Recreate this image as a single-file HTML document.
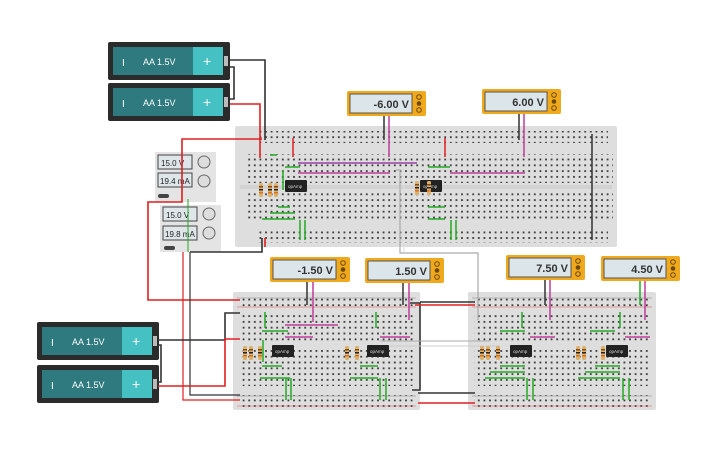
<!DOCTYPE html>
<html><head><meta charset="utf-8"><style>
html,body{margin:0;padding:0;background:#fff;width:725px;height:453px;overflow:hidden}
svg{display:block;font-family:"Liberation Sans",sans-serif}
</style></head><body>
<svg width="725" height="453" viewBox="0 0 725 453" xmlns="http://www.w3.org/2000/svg">
<defs>
<pattern id="h" x="0" y="0" width="5.6" height="5.8" patternUnits="userSpaceOnUse"><rect x="1.9" y="2" width="1.8" height="1.8" fill="#3a3a3a"/></pattern>
<pattern id="hr" x="0" y="0" width="5.6" height="5.6" patternUnits="userSpaceOnUse"><rect x="1.9" y="1.9" width="1.8" height="1.8" fill="#3a3a3a"/></pattern>
<g id="bat">
<rect x="0" y="0" width="122" height="38" rx="2" fill="#2b2b2b"/>
<rect x="5" y="5" width="80" height="28" fill="#2e7a7e"/>
<rect x="85" y="5" width="30" height="28" fill="#45c1c3"/>
<rect x="116" y="14" width="4" height="10" fill="#bbb"/>
<text x="14" y="24" fill="#fff" font-size="10">I</text>
<text x="35" y="23" fill="#fff" font-size="9">AA 1.5V</text>
<text x="95" y="24" fill="#fff" font-size="14">+</text>
</g>
<g id="chip"><rect x="0" y="0" width="22" height="12" rx="1" fill="#222"/><text x="3" y="8" fill="#ddd" font-size="4.5">opAmp</text></g>
<g id="res"><rect x="-2" y="0" width="4" height="14" rx="1.5" fill="#d9b26b"/><rect x="-2" y="3" width="4" height="1.5" fill="#8b4513"/><rect x="-2" y="6" width="4" height="1.5" fill="#222"/><rect x="-2" y="9" width="4" height="1.5" fill="#e07020"/></g>
</defs>

<rect x="235" y="126" width="382" height="121" rx="2" fill="#dedede"/>
<rect x="258" y="131" width="350" height="12" fill="url(#hr)"/>
<rect x="258" y="231" width="350" height="12" fill="url(#hr)"/>
<rect x="245" y="154" width="368" height="29" fill="url(#h)"/>
<rect x="245" y="192" width="368" height="29" fill="url(#h)"/>
<rect x="240" y="185" width="372" height="4" fill="#d2d2d2"/>

<rect x="233" y="292" width="187" height="118" rx="2" fill="#dedede"/>
<rect x="239" y="296" width="176" height="12" fill="url(#hr)"/>
<rect x="239" y="395" width="176" height="12" fill="url(#hr)"/>
<rect x="239" y="312" width="176" height="30" fill="url(#h)"/>
<rect x="239" y="350" width="176" height="36" fill="url(#h)"/>
<line x1="237" y1="298" x2="416" y2="298" stroke="#888" stroke-width=".6"/>
<line x1="237" y1="307" x2="416" y2="307" stroke="#d55" stroke-width=".6"/>
<line x1="237" y1="396" x2="416" y2="396" stroke="#888" stroke-width=".6"/>
<line x1="237" y1="406" x2="416" y2="406" stroke="#d55" stroke-width=".6"/>

<rect x="468" y="292" width="188" height="118" rx="2" fill="#dedede"/>
<rect x="474" y="296" width="176" height="12" fill="url(#hr)"/>
<rect x="474" y="395" width="176" height="12" fill="url(#hr)"/>
<rect x="474" y="312" width="176" height="30" fill="url(#h)"/>
<rect x="474" y="350" width="176" height="36" fill="url(#h)"/>
<line x1="472" y1="298" x2="652" y2="298" stroke="#888" stroke-width=".6"/>
<line x1="472" y1="307" x2="652" y2="307" stroke="#d55" stroke-width=".6"/>
<line x1="472" y1="396" x2="652" y2="396" stroke="#888" stroke-width=".6"/>
<line x1="472" y1="406" x2="652" y2="406" stroke="#d55" stroke-width=".6"/>

<g>
<rect x="155" y="152" width="61" height="50" fill="#e4e4e4"/>
<rect x="158" y="155" width="34" height="14" fill="#dfe6ea" stroke="#444"/>
<text x="161" y="166" font-size="8" fill="#222">15.0 V</text>
<rect x="158" y="173" width="34" height="14" fill="#dfe6ea" stroke="#444"/>
<text x="160" y="184" font-size="8" fill="#222">19.4 mA</text>
<circle cx="204" cy="162" r="6" fill="#ddd" stroke="#666"/>
<circle cx="204" cy="181" r="6" fill="#ddd" stroke="#666"/>
<rect x="158" y="194" width="11" height="4" rx="2" fill="#444"/>
<rect x="160" y="205" width="61" height="47" fill="#e4e4e4"/>
<rect x="163" y="207" width="34" height="14" fill="#dfe6ea" stroke="#444"/>
<text x="166" y="218" font-size="8" fill="#222">15.0 V</text>
<rect x="163" y="226" width="34" height="14" fill="#dfe6ea" stroke="#444"/>
<text x="165" y="237" font-size="8" fill="#222">19.8 mA</text>
<circle cx="209" cy="214" r="6" fill="#ddd" stroke="#666"/>
<circle cx="209" cy="233" r="6" fill="#ddd" stroke="#666"/>
<rect x="164" y="246" width="11" height="4" rx="2" fill="#444"/>
</g>

<use href="#bat" x="108" y="42"/>
<use href="#bat" x="108" y="83"/>
<use href="#bat" x="37" y="322"/>
<use href="#bat" x="37" y="365"/>

<g fill="none" stroke-width="1.6">
<path d="M230 60 H265 V140" stroke="#333"/>
<path d="M230 67 H234 V99 H230" stroke="#333"/>
<path d="M230 104 H260 V158" stroke="#e02020"/>
<path d="M262 139 H182 V202 H148 V300 H240" stroke="#e02020"/>
<path d="M190 252 V395 H240" stroke="#333" stroke-width="1.2"/>
<path d="M183 252 V400 H240" stroke="#e02020" stroke-width="1.2"/>
<path d="M188 199 V252" stroke="#2a2" stroke-width="1"/>
<path d="M190 252 H262 V238" stroke="#333"/>
<path d="M265 238 V247" stroke="#e02020"/>
<path d="M158 340 H225 V313 H240" stroke="#333"/>
<path d="M158 345 H161 V382 H158" stroke="#333"/>
<path d="M158 386 H225 V339 H240" stroke="#e02020"/>
<path d="M410 303 H420 V390 H412" stroke="#333"/>
<path d="M420 302 H475" stroke="#333"/>
<path d="M415 305 H475" stroke="#e02020"/>
<path d="M418 393 H475" stroke="#333"/>
<path d="M418 403 H475" stroke="#e02020"/>
<path d="M396 170 H400 V253 H478 V320" stroke="#aaa" stroke-width="1.2"/>
<path d="M404 173 V252" stroke="#ddd" stroke-width="1"/>
<path d="M380 346 H500" stroke="#ccc" stroke-width="1"/>
<path d="M380 341 H490" stroke="#aaa" stroke-width="1"/>
</g>
<g stroke-width="1.5">
<line x1="298" y1="163" x2="417" y2="163" stroke="#9b3fa8"/>
<line x1="298" y1="173" x2="390" y2="173" stroke="#c03c9c"/>
<line x1="450" y1="173" x2="525" y2="173" stroke="#c03c9c"/>
<line x1="293" y1="138" x2="293" y2="157" stroke="#e02020"/>
<line x1="445" y1="138" x2="445" y2="157" stroke="#e02020"/>
<line x1="285" y1="167" x2="300" y2="167" stroke="#2a2"/>
<line x1="428" y1="167" x2="450" y2="167" stroke="#2a2"/>
<line x1="270" y1="155" x2="277" y2="155" stroke="#2a2"/>
<line x1="270" y1="213" x2="295" y2="213" stroke="#2a2"/>
<line x1="262" y1="219" x2="295" y2="219" stroke="#2a2"/>
<line x1="428" y1="219" x2="445" y2="219" stroke="#2a2"/>
<line x1="428" y1="207" x2="445" y2="207" stroke="#2a2"/>
<line x1="278" y1="207" x2="290" y2="207" stroke="#2a2"/>
<line x1="283" y1="170" x2="283" y2="190" stroke="#2a2"/>
<line x1="300" y1="220" x2="300" y2="240" stroke="#2a2"/>
<line x1="305" y1="220" x2="305" y2="240" stroke="#2a2"/>
<line x1="451" y1="220" x2="451" y2="240" stroke="#2a2"/>
<line x1="456" y1="220" x2="456" y2="240" stroke="#2a2"/>
<line x1="592" y1="134" x2="592" y2="240" stroke="#333"/>
</g>
<g stroke-width="1.5">
<line x1="285" y1="325" x2="338" y2="325" stroke="#c03c9c"/>
<line x1="285" y1="337" x2="313" y2="337" stroke="#c03c9c"/>
<line x1="380" y1="337" x2="410" y2="337" stroke="#c03c9c"/>
<line x1="530" y1="337" x2="555" y2="337" stroke="#c03c9c"/>
<line x1="625" y1="337" x2="650" y2="337" stroke="#c03c9c"/>
<line x1="265" y1="312" x2="265" y2="328" stroke="#2a2"/>
<line x1="376" y1="312" x2="376" y2="328" stroke="#2a2"/>
<line x1="522" y1="312" x2="522" y2="328" stroke="#2a2"/>
<line x1="620" y1="312" x2="620" y2="328" stroke="#2a2"/>
<line x1="262" y1="331" x2="288" y2="331" stroke="#2a2"/>
<line x1="500" y1="331" x2="525" y2="331" stroke="#2a2"/>
<line x1="590" y1="331" x2="615" y2="331" stroke="#2a2"/>
<line x1="262" y1="366" x2="282" y2="366" stroke="#2a2"/>
<line x1="360" y1="366" x2="378" y2="366" stroke="#2a2"/>
<line x1="500" y1="366" x2="525" y2="366" stroke="#2a2"/>
<line x1="595" y1="366" x2="620" y2="366" stroke="#2a2"/>
<line x1="490" y1="372" x2="525" y2="372" stroke="#2a2"/>
<line x1="585" y1="372" x2="620" y2="372" stroke="#2a2"/>
<line x1="260" y1="378" x2="290" y2="378" stroke="#2a2"/>
<line x1="350" y1="378" x2="378" y2="378" stroke="#2a2"/>
<line x1="485" y1="378" x2="525" y2="378" stroke="#2a2"/>
<line x1="578" y1="378" x2="620" y2="378" stroke="#2a2"/>
<line x1="286" y1="378" x2="286" y2="400" stroke="#2a2"/>
<line x1="291" y1="378" x2="291" y2="400" stroke="#2a2"/>
<line x1="380" y1="378" x2="380" y2="400" stroke="#2a2"/>
<line x1="386" y1="378" x2="386" y2="400" stroke="#2a2"/>
<line x1="527" y1="378" x2="527" y2="400" stroke="#2a2"/>
<line x1="533" y1="378" x2="533" y2="400" stroke="#2a2"/>
<line x1="623" y1="378" x2="623" y2="400" stroke="#2a2"/>
<line x1="629" y1="378" x2="629" y2="400" stroke="#2a2"/>
<line x1="263" y1="340" x2="263" y2="362" stroke="#2a2"/>
</g>
<g stroke-width="1.5">
<line x1="384" y1="116" x2="384" y2="140" stroke="#333"/><line x1="389" y1="116" x2="389" y2="157" stroke="#c03c9c"/>
<line x1="519" y1="114" x2="519" y2="140" stroke="#333"/><line x1="524" y1="114" x2="524" y2="157" stroke="#c03c9c"/>
<line x1="307" y1="282" x2="307" y2="305" stroke="#333"/><line x1="313" y1="282" x2="313" y2="322" stroke="#c03c9c"/>
<line x1="403" y1="282" x2="403" y2="305" stroke="#333"/><line x1="409" y1="282" x2="409" y2="320" stroke="#c03c9c"/>
<line x1="545" y1="280" x2="545" y2="305" stroke="#333"/><line x1="550" y1="280" x2="550" y2="320" stroke="#c03c9c"/>
<line x1="640" y1="280" x2="640" y2="305" stroke="#2a2"/><line x1="645" y1="280" x2="645" y2="320" stroke="#c03c9c"/>
</g>
<use href="#chip" x="285" y="180"/><use href="#chip" x="420" y="180"/>
<use href="#chip" x="272" y="345"/><use href="#chip" x="367" y="345"/>
<use href="#chip" x="510" y="345"/><use href="#chip" x="606" y="345"/>
<use href="#res" x="261" y="183"/><use href="#res" x="270" y="183"/><use href="#res" x="276" y="183"/>
<use href="#res" x="417" y="181"/><use href="#res" x="429" y="181"/>
<use href="#res" x="245" y="346"/><use href="#res" x="251" y="346"/><use href="#res" x="260" y="346"/>
<use href="#res" x="347" y="346"/><use href="#res" x="357" y="346"/>
<use href="#res" x="482" y="346"/><use href="#res" x="488" y="346"/><use href="#res" x="498" y="346"/>
<use href="#res" x="578" y="346"/><use href="#res" x="584" y="346"/><use href="#res" x="603" y="346"/>

<g font-size="11" font-weight="bold" fill="#333" text-anchor="end">
<g transform="translate(347,91)"><rect width="79" height="25" rx="2" fill="#f0a81c"/><rect x="3" y="3" width="62" height="19" fill="#dce6ea" stroke="#555"/><text x="62" y="17">-6.00 V</text><circle cx="72" cy="6" r="2.3" fill="none" stroke="#6b4a00"/><circle cx="72" cy="12.5" r="2.3" fill="#6b4a00"/><circle cx="72" cy="19" r="2.3" fill="none" stroke="#6b4a00"/></g>
<g transform="translate(482,89)"><rect width="79" height="25" rx="2" fill="#f0a81c"/><rect x="3" y="3" width="62" height="19" fill="#dce6ea" stroke="#555"/><text x="62" y="17">6.00 V</text><circle cx="72" cy="6" r="2.3" fill="none" stroke="#6b4a00"/><circle cx="72" cy="12.5" r="2.3" fill="#6b4a00"/><circle cx="72" cy="19" r="2.3" fill="none" stroke="#6b4a00"/></g>
<g transform="translate(270,257)"><rect width="80" height="25" rx="2" fill="#f0a81c"/><rect x="3" y="3" width="63" height="19" fill="#dce6ea" stroke="#555"/><text x="63" y="17">-1.50 V</text><circle cx="73" cy="6" r="2.3" fill="none" stroke="#6b4a00"/><circle cx="73" cy="12.5" r="2.3" fill="#6b4a00"/><circle cx="73" cy="19" r="2.3" fill="none" stroke="#6b4a00"/></g>
<g transform="translate(365,258)"><rect width="79" height="25" rx="2" fill="#f0a81c"/><rect x="3" y="3" width="62" height="19" fill="#dce6ea" stroke="#555"/><text x="62" y="17">1.50 V</text><circle cx="72" cy="6" r="2.3" fill="none" stroke="#6b4a00"/><circle cx="72" cy="12.5" r="2.3" fill="#6b4a00"/><circle cx="72" cy="19" r="2.3" fill="none" stroke="#6b4a00"/></g>
<g transform="translate(506,255)"><rect width="79" height="25" rx="2" fill="#f0a81c"/><rect x="3" y="3" width="62" height="19" fill="#dce6ea" stroke="#555"/><text x="62" y="17">7.50 V</text><circle cx="72" cy="6" r="2.3" fill="none" stroke="#6b4a00"/><circle cx="72" cy="12.5" r="2.3" fill="#6b4a00"/><circle cx="72" cy="19" r="2.3" fill="none" stroke="#6b4a00"/></g>
<g transform="translate(601,256)"><rect width="79" height="25" rx="2" fill="#f0a81c"/><rect x="3" y="3" width="62" height="19" fill="#dce6ea" stroke="#555"/><text x="62" y="17">4.50 V</text><circle cx="72" cy="6" r="2.3" fill="none" stroke="#6b4a00"/><circle cx="72" cy="12.5" r="2.3" fill="#6b4a00"/><circle cx="72" cy="19" r="2.3" fill="none" stroke="#6b4a00"/></g>
</g>
</svg>
</body></html>
